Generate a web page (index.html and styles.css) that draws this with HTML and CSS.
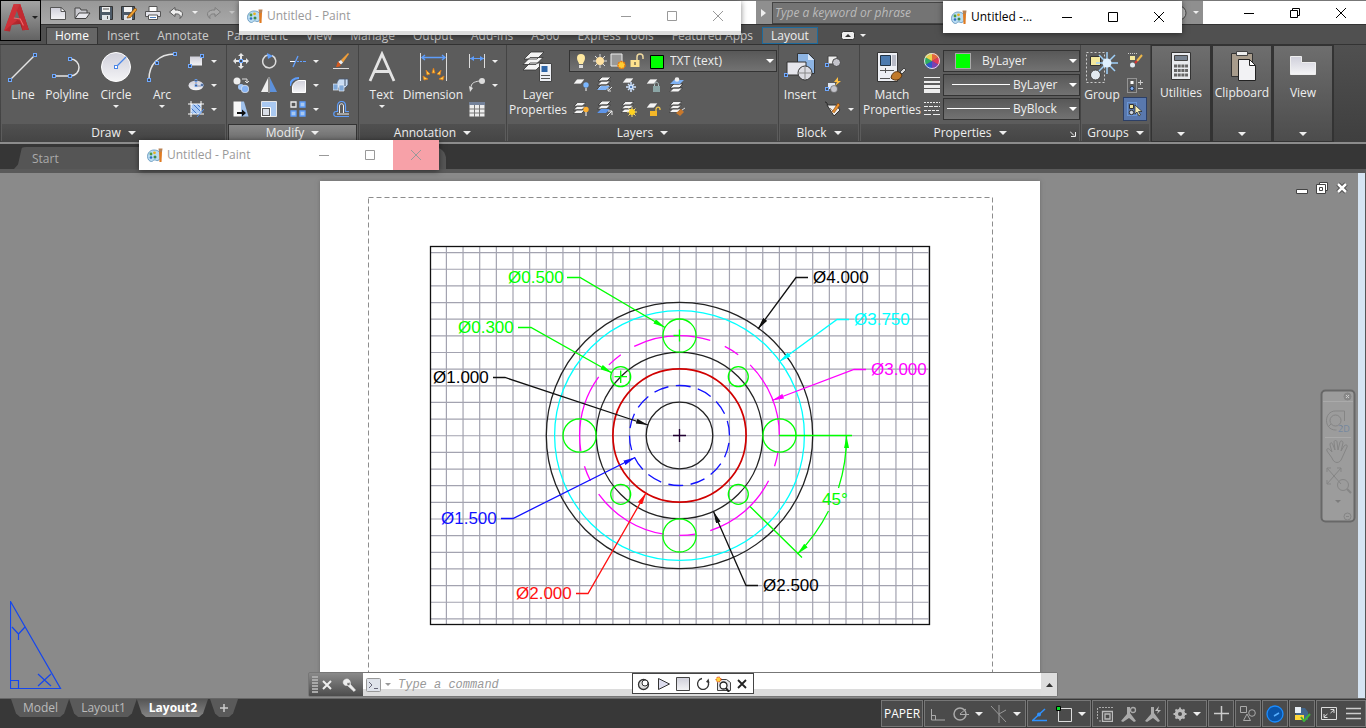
FILE: index.html
```html
<!DOCTYPE html>
<html lang="en">
<head>
  <meta charset="UTF-8">
  <meta name="viewport" content="width=device-width, initial-scale=1.0">
  <title>Layout2</title>
  <link rel="stylesheet" href="styles.css">
</head>
<body>

  <svg class="defs" width="0" height="0" aria-hidden="true">
    <defs>
      <linearGradient id="silver" x1="0" y1="0" x2="0" y2="1"><stop offset="0" stop-color="#cfcfda"/><stop offset="1" stop-color="#f4f4f6"/></linearGradient>
      <linearGradient id="red" x1="0" y1="0" x2="1" y2="1"><stop offset="0" stop-color="#e2464c"/><stop offset="1" stop-color="#8e1218"/></linearGradient>
      <symbol id="grip" viewBox="0 0 4 4"><rect x=".5" y=".5" width="3" height="3" fill="#3f4a5c" stroke="#6ea8ff"/></symbol>
      <symbol id="sheet" viewBox="0 0 12 5"><path d="M4 0h8L8 5H0z" fill="#f4f4f4" stroke="#3a3a3a" stroke-width=".6"/></symbol>
      <symbol id="stack" viewBox="0 0 14 12"><path d="M5 0h9l-4 4H1z M4.500 4h9l-4 4h-9z M4 8h9l-4 4H0z" fill="#f4f4f4" stroke="#333" stroke-width=".8"/></symbol>
      <symbol id="palette" viewBox="0 0 16 16">
        <path d="M7 3C3 3 0.500 6 .5 9.500c0 3 2 5 4 5 1.500 0 1.500-1.500 3-1.500s2 1 3.500.5c2-.8 2.500-3 2.500-5C13.500 5 11 3 7 3z" fill="#b9dcf2" stroke="#5b8fb8" stroke-width=".8"/>
        <circle cx="4" cy="7" r="1.400" fill="#4a9a3a"/><circle cx="7.500" cy="5.800" r="1.400" fill="#e9b020"/><circle cx="4" cy="10.500" r="1.300" fill="#2d6fc2"/><circle cx="8" cy="10" r="1.500" fill="#3d8a4a"/>
        <path d="M12 5h3l-.5 10h-2z" fill="#e07b22"/><path d="M11.500 1.500h4L15 5h-3z" fill="#b98252"/>
      </symbol>
      <marker id="arrow" viewBox="0 0 12 5" refX="12" refY="2.500" markerWidth="12" markerHeight="5" markerUnits="userSpaceOnUse" orient="auto-start-reverse"><path d="M0 0L12 2.500L0 5z" fill="context-stroke"/></marker>
    </defs>
  </svg>

  <header class="titlebar">
    <button class="app-button" aria-label="Application menu">
      <svg width="26" height="30" viewBox="0 0 24 28"><path d="M0 26L9 1h6l8 24-6 .5-2-6-8 1-1.500 6z" fill="url(#red)"/><path d="M0 26l11-9 3-3-4-11-1-2z" fill="#cf3138"/><path d="M9 15l3-8 3 9z" fill="#6b6b6b"/><path d="M9 15c4 0 8 3 8 10.500l6-.5L15 1l-3 6 2.500 7.500z" fill="#c22a31"/><path d="M9 14l6 1 3 6" stroke="#ee6a6d" fill="none"/></svg>
      <span class="caret dark"></span>
    </button>
    <div class="quick">
      <button aria-label="New"><svg width="16" height="14" viewBox="0 0 16 14"><path d="M.5 1.500H11l4.500 4v8H.5z" fill="url(#silver)" stroke="#555"/><path d="M11 1.500v4h4.500z" fill="#fff" stroke="#555"/></svg></button>
      <button aria-label="Open"><svg width="17" height="14" viewBox="0 0 17 14"><path d="M1 12V2h5l1 2h6v3" fill="#c9c9cf" stroke="#444"/><path d="M1 12.500L5 7h11l-4 5.500z" fill="#e8e8ee" stroke="#444"/></svg></button>
      <button aria-label="Save"><svg width="14" height="14" viewBox="0 0 14 14"><path d="M.5.5h13v13H.5z" fill="#4d5a68" stroke="#333"/><path d="M3 1h8v5H3z" fill="#f2f2f2"/><path d="M3 9h8v5H3z" fill="#dfe3e8"/><path d="M4 3h6M8.500 10v3" stroke="#555"/></svg></button>
      <button aria-label="Save as"><svg width="16" height="14" viewBox="0 0 16 14"><path d="M.5.5h13v13H.5z" fill="#4d5a68" stroke="#333"/><path d="M3 1h8v5H3z" fill="#f2f2f2"/><path d="M3 9h8v5H3z" fill="#dfe3e8"/><path d="M7 10l7-8 2 1.500-6.500 8L6 12z" fill="#f0a030" stroke="#6b3d10" stroke-width=".7"/></svg></button>
      <button aria-label="Plot"><svg width="16" height="14" viewBox="0 0 16 14"><path d="M4 .5h8V6H4z" fill="#fff" stroke="#555"/><path d="M.5 5.500h15v5H.5z" fill="#e4e4ea" stroke="#555"/><path d="M3.500 9h9v4.500h-9z" fill="#fff" stroke="#555"/><path d="M5 11.500h6" stroke="#4d80c0"/></svg></button>
      <button aria-label="Undo"><svg width="15" height="12" viewBox="0 0 15 12"><path d="M6 .5L.5 5 6 9.500V7c4-.5 6 1 5 4.500C16 7 13 2.500 6 3z" fill="#eee" stroke="#555"/></svg></button>
      <span class="caret"></span>
      <button aria-label="Redo"><svg width="15" height="12" viewBox="0 0 15 12"><path d="M9 .5L14.500 5 9 9.500V7c-4-.5-6 1-5 4.500C-1 7 2 2.500 9 3z" fill="#aaa" stroke="#7d7d7d"/></svg></button>
      <span class="caret faint"></span>
    </div>
    <div class="spacer"></div>
    <form class="search">
      <span class="search-arrow"></span>
      <input type="text" placeholder="Type a keyword or phrase" aria-label="Search">
      <span class="help"><svg width="16" height="16" viewBox="0 0 16 16"><circle cx="8" cy="8" r="7" fill="#bbb" stroke="#444"/></svg></span>
      <span class="caret"></span>
    </form>
    <div class="controls">
      <button aria-label="Minimize"><svg width="12" height="12" viewBox="0 0 12 12"><path d="M1 6.500h10"/></svg></button>
      <button aria-label="Restore"><svg width="12" height="12" viewBox="0 0 12 12"><path d="M1.500 3.500h7v7h-7zM3.500 3.500v-2h7v7h-2"/></svg></button>
      <button aria-label="Close"><svg width="12" height="12" viewBox="0 0 12 12"><path d="M1 1l10 10M11 1L1 11"/></svg></button>
    </div>
  </header>

  <nav class="tabs">
    <a href="#" class="active">Home</a>
    <a href="#">Insert</a>
    <a href="#">Annotate</a>
    <a href="#">Parametric</a>
    <a href="#">View</a>
    <a href="#">Manage</a>
    <a href="#">Output</a>
    <a href="#">Add-ins</a>
    <a href="#">A360</a>
    <a href="#">Express Tools</a>
    <a href="#">Featured Apps</a>
    <a href="#" class="context">Layout</a>
    <button class="collapse" aria-label="Minimize ribbon"><svg width="14" height="9" viewBox="0 0 14 9"><rect x=".5" y=".5" width="13" height="8" rx="2" fill="#eee" stroke="#333"/><path d="M4 6l3-3 3 3z" fill="#333"/></svg><span class="caret"></span></button>
  </nav>

  <main class="ribbon">
    <section class="panel draw">
      <div class="tools">
        <button class="big line"><svg width="32" height="32" viewBox="0 0 32 32"><path d="M4 28L28 4" stroke="#e4e4e4" stroke-width="1.500"/><use href="#grip" x="1" y="27" width="4" height="4"/><use href="#grip" x="26" y="2" width="4" height="4"/></svg>Line</button>
        <button class="big poly"><svg width="32" height="32" viewBox="0 0 32 32"><path d="M3 25h16c12 0 12-17 0-17" fill="none" stroke="#e4e4e4" stroke-width="1.500"/><use href="#grip" x="1" y="23" width="4" height="4"/><use href="#grip" x="17" y="23" width="4" height="4"/><use href="#grip" x="17" y="6" width="4" height="4"/></svg>Polyline</button>
        <button class="big circle"><svg width="32" height="32" viewBox="0 0 32 32"><circle cx="16" cy="16" r="14.500" fill="url(#silver)" stroke="#fff"/><path d="M16 16L26 6" stroke="#4a86e8" stroke-width="1.200"/><rect x="14.500" y="14.500" width="3" height="3" fill="#fff" stroke="#4a86e8"/></svg>Circle<span class="caret"></span></button>
        <button class="big arc"><svg width="32" height="32" viewBox="0 0 32 32"><path d="M3 28C3 14 12 3 29 3" fill="none" stroke="#e4e4e4" stroke-width="1.500"/><use href="#grip" x="1" y="27" width="4" height="4"/><use href="#grip" x="9" y="10" width="4" height="4"/><use href="#grip" x="27" y="1" width="4" height="4"/></svg>Arc<span class="caret"></span></button>
        <div class="column">
          <button class="split" aria-label="Rectangle"><svg width="16" height="16" viewBox="0 0 16 16"><rect x="2" y="3.500" width="12" height="9" fill="url(#silver)"/><use href="#grip" x="0" y="11" width="4" height="4"/><use href="#grip" x="12" y="1" width="4" height="4"/></svg><span class="caret"></span></button>
          <button class="split" aria-label="Ellipse"><svg width="16" height="16" viewBox="0 0 16 16"><ellipse cx="8" cy="8.500" rx="7.500" ry="4.800" fill="url(#silver)"/><path d="M8 4v5h5" fill="none" stroke="#557" stroke-width=".6"/><use href="#grip" x="6.500" y="2" width="3" height="3"/><use href="#grip" x="6.500" y="7" width="3" height="3"/><use href="#grip" x="12.500" y="6.500" width="3" height="3"/></svg><span class="caret"></span></button>
          <button class="split" aria-label="Hatch"><svg width="16" height="16" viewBox="0 0 16 16"><rect x="3" y="3" width="10" height="10" fill="#a9c9f4"/><path d="M3 7l6 6M3 11l2 2M5 3l8 8M9 3l4 4" stroke="#4174c4"/><path d="M3 0v16M13 0v12M0 3h16M0 13h16" stroke="#fff"/><path d="M9 16l7-8" stroke="#4a8cf0"/></svg><span class="caret"></span></button>
        </div>
      </div>
      <h2>Draw<span class="caret wide"></span></h2>
    </section>

    <section class="panel modify">
      <div class="tools grid">
        <button aria-label="Move"><svg width="16" height="16" viewBox="0 0 16 16"><path d="M8 0l3 3H9v3H7V3H5zM8 16l-3-3h2v-3h2v3h2zM0 8l3-3v2h3v2H3v2zM16 8l-3 3V9h-3V7h3V5z" fill="#e6e6e6"/><use href="#grip" x="6" y="6" width="4" height="4"/></svg></button>
        <button aria-label="Rotate"><svg width="16" height="16" viewBox="0 0 16 16"><path d="M11 2.500A6.500 6.500 0 1 1 7 2" fill="none" stroke="#ddd" stroke-width="1.500"/><path d="M6 0l6 3-5 3z" fill="#5e9dfa"/></svg></button>
        <button class="split" aria-label="Trim"><svg width="16" height="16" viewBox="0 0 16 16"><path d="M0 8.500h5" stroke="#fff"/><path d="M7 8.500h2m1 0h2m1 0h3" stroke="#62a0ff"/><path d="M3 14l5-11" stroke="#62a0ff" stroke-width="1.300"/></svg><span class="caret"></span></button>
        <button aria-label="Erase"><svg width="16" height="16" viewBox="0 0 16 16"><path d="M0 15.500h16" stroke="#ddd"/><path d="M15 0L8 7l2 2.500L16 1z" fill="#ee9d3a"/><path d="M8 7l2 2.500-2 2-3-2.500z" fill="#eee"/><path d="M5 8.500l3 3.500c-1 2-4 2-5 2 1-2 1-4 2-5.500z" fill="#d7591d"/></svg></button>
        <button aria-label="Copy"><svg width="16" height="16" viewBox="0 0 16 16"><circle cx="4" cy="4" r="3.500" fill="#eee"/><path d="M9 2h5v4m-2-2l2 2 2-2" fill="none" stroke="#ddd"/><circle cx="8" cy="10" r="3" fill="#9fc4f6"/><circle cx="12" cy="12" r="3.800" fill="#86b3f3" stroke="#eee" stroke-width=".7"/></svg></button>
        <button aria-label="Mirror"><svg width="16" height="16" viewBox="0 0 16 16"><path d="M7 1v14H0z" fill="#eee"/><path d="M9 1v14h7z" fill="#5d91db"/><path d="M8 0v16" stroke="#bbb"/></svg></button>
        <button class="split" aria-label="Fillet"><svg width="16" height="16" viewBox="0 0 16 16"><path d="M2.500 15.500V10C3 6 6 4 9 3.500h6.500v12z" fill="url(#silver)" stroke="#fff"/><path d="M0 9C0 4 4 1 9 1" fill="none" stroke="#5e9dfa" stroke-width="2"/></svg><span class="caret"></span></button>
        <button aria-label="Explode"><svg width="16" height="16" viewBox="0 0 16 16"><path d="M6 2h9v6l-3 3H4V5z" fill="#c9dcf3" stroke="#46566e" stroke-width=".8"/><path d="M0 7h5v6H0zM6 8h5v6H6z" fill="#7fa8d8" stroke="#e8eef6" stroke-width=".7"/><path d="M12 2v7" stroke="#46566e"/></svg></button>
        <button aria-label="Stretch"><svg width="16" height="16" viewBox="0 0 16 16"><path d="M.5.5H8v15H.5z" fill="#f7f7f7"/><path d="M8 .5h3L15.500 15.500H8z" fill="#9fc0ea"/><path d="M4 11h5V8.500l4 3.500-4 3.500V13H4z" fill="#111"/></svg></button>
        <button aria-label="Scale"><svg width="16" height="16" viewBox="0 0 16 16"><path d="M.5.5h15v15H.5z" fill="#a9c8f0" stroke="#e6e6e6"/><path d="M.5 6.500h9v9h-9z" fill="#555" stroke="#fff"/><path d="M2 8h6v6H2z" fill="#d8dde6"/></svg></button>
        <button class="split" aria-label="Array"><svg width="16" height="16" viewBox="0 0 16 16"><path d="M1 1h5v5H1z" fill="#555" stroke="#eee" stroke-width="1.300"/><path d="M10 1h5v5h-5zM1 10h5v5H1zM10 10h5v5h-5z" fill="#a9c8f0" stroke="#5e9dfa" stroke-width="1.300"/></svg><span class="caret"></span></button>
        <button aria-label="Offset"><svg width="16" height="16" viewBox="0 0 16 16"><path d="M16 15.500H3c-3 0-3-5 0-5h1.500V5c0-6 8-6 8 0v5.500H16" fill="none" stroke="#5e9dfa" stroke-width="1.200"/><path d="M16 13H4M6.500 12V5c0-3 4-3 4 0v7" fill="none" stroke="#eee"/></svg></button>
      </div>
      <h2 class="hover">Modify<span class="caret wide"></span></h2>
    </section>

    <section class="panel annotation">
      <div class="tools">
        <button class="big text"><svg width="32" height="32" viewBox="0 0 32 32"><path d="M4 30L16 3l12 27M8.500 20.500h15" fill="none" stroke="#e4e4e4" stroke-width="2.800"/></svg>Text<span class="caret"></span></button>
        <button class="big dim"><svg width="32" height="32" viewBox="0 0 32 32"><path d="M3.500 2v28M29.500 2v28" stroke="#ddd"/><path d="M5 6.500h23M8 4L5 6.500 8 9M25 4l3 2.500L25 9" stroke="#5e9dfa" fill="none" stroke-width="1.500"/><path d="M15 22l1.500-5 1.500 5zM10 24l-1-5 4 4zM23 24l1-5-4 4zM7 29l-1-4 5 3zM26 29l1-4-5 3z" fill="#ffd04a" stroke="#e07a18" stroke-width=".8"/></svg>Dimension</button>
        <div class="column">
          <button class="split" aria-label="Linear"><svg width="16" height="16" viewBox="0 0 16 16"><path d="M.5 1v14M15.500 1v14" stroke="#ddd"/><path d="M1 5.500h14" stroke="#5e9dfa"/><path d="M1 5.500L5 3v5zM15 5.500L11 3v5z" fill="#5e9dfa"/></svg><span class="caret"></span></button>
          <button class="split" aria-label="Leader"><svg width="16" height="16" viewBox="0 0 16 16"><path d="M2 11c0-5 3-6 8-7" fill="none" stroke="#ddd"/><path d="M1 15l-1-6 4 2z" fill="#ddd"/><circle cx="13" cy="4" r="3" fill="#ddd"/></svg><span class="caret"></span></button>
          <button class="split" aria-label="Table"><svg width="16" height="16" viewBox="0 0 16 16"><path d="M.5 1h15v14.500H.5z" fill="#eee"/><path d="M0 1h16v3H0z" fill="#74829a"/><path d="M5.500 4v12M10.500 4v12M0 8h16M0 12h16" stroke="#777"/></svg></button>
        </div>
      </div>
      <h2>Annotation<span class="caret wide"></span></h2>
    </section>

    <section class="panel layers">
      <div class="tools">
        <button class="big layerprop"><svg width="32" height="32" viewBox="0 0 32 32"><path d="M9 1h13l-7 7H2zM8 6.500h13l-7 7H1zM8 12h13l-7 7H1z" fill="#f4f4f4" stroke="#333" stroke-width=".8"/><path d="M17.500 12.500h12v18h-12z" fill="#eef1f6" stroke="#444"/><path d="M19.500 15h6v6h-6z" fill="#2d65a8"/><path d="M19 24.500h9M19 27.500h9" stroke="#555"/></svg>Layer<br>Properties</button>
        <div class="layer-tools">
          <label class="pick layer-pick">
            <select aria-label="Current layer"><option>TXT (text)</option></select>
            <svg width="96" height="20" viewBox="0 0 96 20">
              <path d="M9 3a4 4 0 0 1 4 4c0 3-2 4-2 6H7c0-2-2-3-2-6a4 4 0 0 1 4-4z" fill="#ffe9a0"/><path d="M7 14h4v3H7z" fill="#ddd"/>
              <path d="M28 3v14M21 10h14M23 5l10 10M33 5L23 15" stroke="#ddd"/><circle cx="28" cy="10" r="4" fill="#ffe2a2"/>
              <path d="M39 3h11v12H39z" fill="#999" stroke="#eee"/><circle cx="49.500" cy="14" r="3.500" fill="#ffcc33" stroke="#e8760c" stroke-width="1.500" stroke-dasharray="2 1"/>
              <path d="M58.500 9h9v7h-9z" fill="#ffe28e"/><path d="M65 9V6c0-4 6-4 6 0v2" fill="none" stroke="#eed9a0" stroke-width="1.500"/><path d="M63 11v3" stroke="#333"/>
              <path d="M78.500 4.500h13v13h-13z" fill="#0f0" stroke="#000"/>
            </svg>
          </label>
          <div class="layer-grid">
            <button aria-label="Layer off"><svg width="16" height="16" viewBox="0 0 16 16"><use href="#sheet" x="0" y="2" width="12" height="5"/><circle cx="13" cy="8" r="2.700" fill="#7bb7ff"/><path d="M13 11v3" stroke="#fff"/></svg></button>
            <button aria-label="Isolate"><svg width="16" height="16" viewBox="0 0 16 16"><use href="#stack" x="0" y="0" width="14" height="12"/><path d="M4 9h9l-4 4H0z" fill="#7fb2f4"/><path d="M15 10l-4 4m0-3v3h3" stroke="#ddd" fill="none"/></svg></button>
            <button aria-label="Freeze"><svg width="16" height="16" viewBox="0 0 16 16"><use href="#sheet" x="1" y="1" width="12" height="5"/><path d="M10 5v10M5 10h10M7 7l6 6M13 7l-6 6" stroke="#cfe4ff" stroke-width="1.500"/><circle cx="10" cy="10" r="1" fill="#2e5fa3"/></svg></button>
            <button aria-label="Lock"><svg width="16" height="16" viewBox="0 0 16 16"><use href="#sheet" x="1" y="2" width="12" height="5"/><path d="M8 9h7v6H8z" fill="#8ba6a6"/><path d="M9.500 9c-.5-5 4.500-5 4 0" fill="none" stroke="#b7cccc"/></svg></button>
            <button aria-label="Make current"><svg width="16" height="16" viewBox="0 0 16 16"><use href="#stack" x="0" y="3" width="15" height="12"/><path d="M5 3h10l-4 4H1z" fill="#7fb2f4"/><circle cx="8" cy="2.500" r="2.300" fill="#eee"/></svg></button>
            <button aria-label="Turn all on"><svg width="16" height="16" viewBox="0 0 16 16"><use href="#stack" x="0" y="1" width="13" height="12"/><circle cx="13" cy="8.500" r="2.700" fill="#ffb02e"/><path d="M13 11v4" stroke="#fff"/></svg></button>
            <button aria-label="Unisolate"><svg width="16" height="16" viewBox="0 0 16 16"><use href="#stack" x="0" y="0" width="14" height="12"/><path d="M4 8h9l-4 4H0z" fill="#5f95e8"/><path d="M10 15l5-5m-4 0h4v4" stroke="#eee" fill="none"/></svg></button>
            <button aria-label="Thaw"><svg width="16" height="16" viewBox="0 0 16 16"><use href="#stack" x="0" y="0" width="13" height="12"/><path d="M11 6v10M6 11h10M7.500 7.500l7 7M14.500 7.500l-7 7" stroke="#ffe27a"/><circle cx="11" cy="11" r="3" fill="#ffd21f"/></svg></button>
            <button aria-label="Unlock"><svg width="16" height="16" viewBox="0 0 16 16"><use href="#sheet" x="1" y="2" width="12" height="5"/><path d="M5 10h7v5H5z" fill="#f4b728"/><path d="M11 10c-.5-5 4.500-5 4-1" fill="none" stroke="#f4c94a" stroke-width="1.300"/></svg></button>
            <button aria-label="Match layer"><svg width="16" height="16" viewBox="0 0 16 16"><use href="#stack" x="0" y="0" width="13" height="12"/><path d="M7 12l5-4 3 3-4 4z" fill="#c8782c"/><path d="M13 9l3-2" stroke="#ddd"/></svg></button>
          </div>
        </div>
      </div>
      <h2>Layers<span class="caret wide"></span></h2>
    </section>

    <section class="panel block">
      <div class="tools">
        <button class="big insert"><svg width="32" height="32" viewBox="0 0 32 32"><path d="M13.500 2.500h11l6 6v14h-17z" fill="#8db4e3" stroke="#333"/><path d="M24 3v6h6z" fill="#dbe8f8"/><path d="M3 11h19v13H3z" fill="#e6e6ec" stroke="#333"/><circle cx="21" cy="22" r="7" fill="#dcdce2" stroke="#333"/><path d="M21 15v14M14 22h14" stroke="#888"/><use href="#grip" x="0" y="22" width="4" height="4"/></svg>Insert</button>
        <div class="column">
          <button class="split" aria-label="Create block"><svg width="16" height="16" viewBox="0 0 16 16"><path d="M3 3h9v8H3z" fill="#eee" stroke="#444"/><circle cx="11.500" cy="9.500" r="4" fill="#c3c3ca" stroke="#444"/><use href="#grip" x="0" y="10" width="4" height="4"/></svg></button>
          <button class="split" aria-label="Block editor"><svg width="16" height="16" viewBox="0 0 16 16"><path d="M3 6h7v6H3z" fill="#dfe6f2"/><circle cx="9" cy="12" r="3.500" fill="#c3c3ca" stroke="#555" stroke-width=".6"/><path d="M13 0l-4 5h3l-2 4 6-5h-3z" fill="#ffc042"/><use href="#grip" x="0" y="10" width="4" height="4"/></svg></button>
          <button class="split" aria-label="Edit attributes"><svg width="16" height="16" viewBox="0 0 16 16"><path d="M0 1c3 0 2 4 3 5" stroke="#222" fill="none"/><path d="M2 4h9l4 5-6 6z" fill="#eee" stroke="#333"/><path d="M5 7l3 3M7 11l6-9 2 2-6 8" fill="#e8902c" stroke="#7b3b0c" stroke-width=".6"/></svg><span class="caret"></span></button>
        </div>
      </div>
      <h2>Block<span class="caret wide"></span></h2>
    </section>

    <section class="panel properties">
      <div class="tools">
        <button class="big match"><svg width="32" height="32" viewBox="0 0 32 32"><path d="M1.500 1.500h20v29h-20z" fill="#eef0f5" stroke="#333"/><path d="M4.500 4.500h10v10h-10z" fill="#4c7bb0" stroke="#234"/><path d="M16 4h4v11h-4z" fill="#b9bcc8"/><path d="M4 19.500h14M9.500 17v5M4 27.500h10" stroke="#555"/><path d="M15 27c1-6 5-7 8-6l3 3c-1 5-7 7-11 3z" fill="#c27a2a" stroke="#5a3510"/><path d="M24 21l4-4 2 2-4 4z" fill="#dcdcdc" stroke="#444"/></svg>Match<br>Properties</button>
        <div class="props">
          <svg width="16" height="16" viewBox="0 0 16 16"><path d="M8 8V0a8 8 0 0 1 7 4z" fill="#e66a3c"/><path d="M8 8l7-4a8 8 0 0 1 0 8z" fill="#e03a5c"/><path d="M8 8l7 4a8 8 0 0 1-7 4z" fill="#7c3fb2"/><path d="M8 8v8a8 8 0 0 1-7-4z" fill="#2e58c9"/><path d="M8 8l-7 4a8 8 0 0 1 0-8z" fill="#2fae63"/><path d="M8 8L1 4a8 8 0 0 1 7-4z" fill="#e8d44d"/><circle cx="8" cy="8" r="7.500" fill="none" stroke="#ddd"/></svg>
          <label class="pick color-pick"><select aria-label="Object color"><option>ByLayer</option></select><i class="swatch"></i></label>
          <svg width="16" height="16" viewBox="0 0 16 16"><path d="M0 .5h16" stroke="#eee"/><path d="M0 5h16" stroke="#eee" stroke-width="2"/><path d="M0 9.500h16" stroke="#eee" stroke-width="3"/><path d="M0 14h16" stroke="#eee" stroke-width="4"/></svg>
          <label class="pick weight-pick"><select aria-label="Lineweight"><option>ByLayer</option></select><i class="rule"></i></label>
          <svg width="16" height="16" viewBox="0 0 16 16"><path d="M0 1.500h16" stroke="#eee" stroke-dasharray="2 1"/><path d="M0 5.500h16" stroke="#eee" stroke-dasharray="4 1"/><path d="M0 9.500h16" stroke="#eee" stroke-dasharray="3 1"/><path d="M0 13.500h16" stroke="#eee" stroke-dasharray="7 2"/></svg>
          <label class="pick type-pick"><select aria-label="Linetype"><option>ByBlock</option></select><i class="rule"></i></label>
        </div>
      </div>
      <h2>Properties<span class="caret wide"></span><svg class="launcher" width="6" height="6" viewBox="0 0 6 6"><path d="M0 .5l4 4M5.500 1v4.500H1" fill="none" stroke="#eee"/></svg></h2>
    </section>

    <section class="panel groups">
      <div class="tools">
        <button class="big group"><svg width="32" height="32" viewBox="0 0 32 32"><path d="M.5 1.500h18v30H.5z" fill="none" stroke="#ccc" stroke-dasharray="2 2"/><path d="M4.500 5.500h10v9h-10z" fill="#f4e89c" stroke="#333"/><circle cx="9.500" cy="24" r="5" fill="#e2eaf0" stroke="#444"/><path d="M21 1v22M10 12h22M13 4l16 16M29 4L13 20" stroke="#9fd0fa" stroke-width="1.500"/><circle cx="21" cy="12" r="4.500" fill="#dff0ff"/></svg>Group</button>
        <div class="column">
          <button aria-label="Group edit"><svg width="16" height="16" viewBox="0 0 16 16"><path d="M1 .5h9" stroke="#ccc" stroke-dasharray="1 1"/><path d="M3 3h5v4H3z" fill="#f4e89c"/><circle cx="5.500" cy="12" r="2.500" fill="#e2eaf0"/><path d="M10 8l5-6" stroke="#eeb84a" stroke-width="2"/><path d="M8 10l2-2" stroke="#d33" stroke-width="2"/></svg></button>
          <button aria-label="Ungroup"><svg width="16" height="16" viewBox="0 0 16 16"><path d="M.5 1.500h9v14h-9z" fill="none" stroke="#ccc" stroke-dasharray="1 1"/><path d="M3.500 4h3v3h-3z" fill="#fff"/><circle cx="5" cy="11.500" r="2" fill="#86b3f3" stroke="#235"/><path d="M11 5.500h5M13.500 3v5M11 11.500h5" stroke="#ccc"/></svg></button>
          <button class="on" aria-label="Group selection on"><svg width="16" height="16" viewBox="0 0 16 16"><path d="M.5 1.500h9v13h-9z" fill="none" stroke="#7ab4ff" stroke-dasharray="1 1"/><path d="M2.500 3.500h4v4h-4z" fill="#f4e89c" stroke="#333"/><circle cx="4.500" cy="11.500" r="2.200" fill="#cfd8e2" stroke="#333"/><path d="M8 4v9l2-2 2 4 1.500-1-2-3.500H15z" fill="#f6eeb8" stroke="#222" stroke-width=".7"/></svg></button>
        </div>
      </div>
      <h2>Groups<span class="caret wide"></span></h2>
    </section>

    <button class="folded"><svg width="32" height="32" viewBox="0 0 32 32"><path d="M6.500 2.500h19v27h-19z" fill="#e8eaee" stroke="#333"/><path d="M9.500 5.500h13v5h-13z" fill="#778290" stroke="#444"/><path d="M9 16h14M9 20.500h14M9 25h14" stroke="#666" stroke-width="3" stroke-dasharray="3 .7"/></svg>Utilities<span class="caret wide"></span></button>
    <button class="folded"><svg width="32" height="32" viewBox="0 0 32 32"><path d="M5.500 3.500h21v23h-21z" fill="#a89c8c" stroke="#333"/><path d="M10.500 1.500h11v4h-11z" fill="#eee" stroke="#444"/><path d="M12.500 9.500h11l6 6v15h-17z" fill="#f2f2f4" stroke="#222"/><path d="M23.500 9.500v6h6z" fill="#fff" stroke="#222"/></svg>Clipboard<span class="caret wide"></span></button>
    <button class="folded"><svg width="32" height="32" viewBox="0 0 32 32"><path d="M3.500 6.500h11v6h14v12h-25z" fill="url(#silver)" stroke="#eee"/></svg>View<span class="caret wide"></span></button>
  </main>

  <nav class="files">
    <a href="#">Start</a>
  </nav>

  <section class="canvas">
    <svg class="paper" width="720" height="509" viewBox="320 181 720 509">
      <rect x="368.500" y="197.500" width="624" height="475" fill="none" stroke="#8d8d8d" stroke-dasharray="5 3"/>
      <!-- quarter inch grid -->
      <path d="M445.800 435.500H929" stroke="#a3a3b0" stroke-width="378" stroke-dasharray="1.200 15.450"/>
      <path d="M679.500 252V624" stroke="#a3a3b0" stroke-width="498" stroke-dasharray="1.200 15.450"/>
      <rect x="430.500" y="246.500" width="499" height="378" fill="none" stroke="#111" stroke-width="1.300"/>
      <g transform="translate(679.500 435.500)" fill="none" stroke-width="1.300">
        <circle r="133.200" stroke="#222"/>
        <circle r="124.900" stroke="#0ff"/>
        <circle r="99.900" stroke="#f0f" pathLength="40" stroke-dasharray="5 1 1 1" transform="scale(1 -1)"/>
        <circle r="83.200" stroke="#222"/>
        <circle r="66.600" stroke="#d00000" stroke-width="1.700"/>
        <circle r="50" stroke="#11f" pathLength="42" stroke-dasharray="2 1" transform="scale(1 -1)"/>
        <circle r="33.300" stroke="#222"/>
        <g stroke="#0f0">
          <circle cy="-99.900" r="16.600"/><circle cy="99.900" r="16.600"/><circle cx="-99.900" r="16.600"/><circle cx="99.900" r="16.600"/>
          <circle cx="-58.800" cy="-58.800" r="10"/><circle cx="58.800" cy="-58.800" r="10"/><circle cx="-58.800" cy="58.800" r="10"/><circle cx="58.800" cy="58.800" r="10"/>
          <path d="M0-106V-94M-6-100H0M-58.800-65v12.500M-65-58.800h12.500"/>
        </g>
        <path d="M-6.500 0h13M0-6.500v13" stroke="#203"/>
      </g>
      <g fill="none" stroke-width="1.300">
        <g stroke="#0f0">
          <path d="M567 277.500H580L665 327.500" marker-end="url(#arrow)"/>
          <path d="M518 327.500H531L612 373" marker-end="url(#arrow)"/>
          <path d="M779 435.500H852M750 506.500L802 557.500"/>
          <path d="M846.500 436A167 167 0 0 1 838.500 488" marker-start="url(#arrow)"/>
          <path d="M828.500 511A167 167 0 0 1 797.500 554" marker-end="url(#arrow)"/>
        </g>
        <path d="M493 377.500H505L648 425" stroke="#111" marker-end="url(#arrow)"/>
        <path d="M808 277.500H796L758 329" stroke="#111" marker-end="url(#arrow)"/>
        <path d="M758 585.500H746L713.500 511.500" stroke="#111" marker-end="url(#arrow)"/>
        <path d="M849 319.500H837L779.500 361.500" stroke="#0ff" marker-end="url(#arrow)"/>
        <path d="M866 369.500H854L772 400.500" stroke="#f0f" marker-end="url(#arrow)"/>
        <path d="M501 518.500H513L635 457.500" stroke="#11f" marker-end="url(#arrow)"/>
        <path d="M576 593.500H588L646 493" stroke="#f11" marker-end="url(#arrow)"/>
      </g>
      <g class="dims">
        <text x="508" y="283" fill="#0f0">Ø0.500</text>
        <text x="458" y="333" fill="#0f0">Ø0.300</text>
        <text x="433" y="383">Ø1.000</text>
        <text x="441" y="524" fill="#11f">Ø1.500</text>
        <text x="516" y="599" fill="#f11">Ø2.000</text>
        <text x="763" y="591">Ø2.500</text>
        <text x="813" y="283">Ø4.000</text>
        <text x="854" y="325" fill="#0ff">Ø3.750</text>
        <text x="871" y="375" fill="#f0f">Ø3.000</text>
        <text x="822" y="505" fill="#0f0">45°</text>
      </g>
    </svg>

    <svg class="ucs" width="52" height="89" viewBox="0 0 52 89"><path d="M.5.5V87.500H50.500zM.5 79.500h8v8M2 26l6.500 7L15 26M8.500 33v6M28 73l13 12M41 73L28 85" fill="none" stroke="#1546ee" stroke-width="1.200"/></svg>

    <div class="doc-controls">
      <button aria-label="Minimize drawing"><svg width="12" height="12" viewBox="0 0 12 12"><path d="M.5 7.500h11v4H.5z" fill="#fff" stroke="#444"/></svg></button>
      <button aria-label="Restore drawing"><svg width="12" height="12" viewBox="0 0 12 12"><path d="M3.500.5h8v8h-8z" fill="#fff" stroke="#444"/><path d="M.5 2.500h9v9h-9z" fill="#fff" stroke="#444"/><path d="M3.500 5.500h3v3h-3z" stroke="#444" fill="none"/></svg></button>
      <button aria-label="Close drawing"><svg width="12" height="12" viewBox="0 0 12 12"><path d="M2 2l8 8M10 2l-8 8" stroke="#444" stroke-width="4.500"/><path d="M2 2l8 8M10 2l-8 8" stroke="#fff" stroke-width="2.500"/></svg></button>
    </div>

    <svg class="navbar" width="36" height="134" viewBox="0 0 36 134">
      <rect x="1.500" y="1.500" width="33" height="131" rx="4" fill="#9c9c9c" stroke="#686868" stroke-width="2"/>
      <g fill="none" stroke="#858585"><circle cx="27.500" cy="7.500" r="3.500" fill="#8a8a8a"/><path d="M26 6l3 3M29 6l-3 3" stroke="#ccc"/><path d="M3 12.500h30M5 48.500h26" stroke="#aaa"/>
        <path d="M24.500 32V22h-9c-12 0-12 19 0 19h1"/><circle cx="15.500" cy="31.500" r="5.500"/><path d="M11 35l-3 3M20 36l3 2"/>
        <path d="M12 69l-5-7c-1-3 2-3 3-1l2 2-2-7c0-3 2-3 3 0l2 5-1-8c0-2 3-2 3 0l1 8 2-8c1-2 3-1 3 1l-2 8 3-5c2-2 4-1 3 1l-5 11c-2 6-8 6-10 0z"/>
        <path d="M7 79l14 16M21 79L7 95M7 83v-4h4M17 79h4v4M7 91v4h4"/><circle cx="23" cy="96" r="5.500"/><path d="M27 100l4 4" stroke-width="2"/><circle cx="27.500" cy="127.500" r="3.500"/><path d="M26 127.500h3"/></g>
      <path d="M15 111h6l-3 3z" fill="#7c7c7c"/><text x="18" y="43" font-size="9" fill="#7488a0">2D</text>
    </svg>

    <form class="command">
      <span class="command-grip"></span>
      <button type="button" aria-label="Close command line"><svg width="10" height="10" viewBox="0 0 10 10"><path d="M1 1l8 8M9 1L1 9" stroke="#eee" stroke-width="2"/></svg></button>
      <button type="button" aria-label="Customize"><svg width="14" height="14" viewBox="0 0 14 14"><path d="M5 1L4 3l2 2 2-1c1 3-1 4-2.500 3.500L12 13.500l1.500-1.500L8 6c1-2-.5-5-3-5zM5 1C2 1 0 4 2 6.500c1 1 2 1 3.500 1" fill="#eee" stroke="#eee" stroke-width=".6"/></svg></button>
      <label>
        <svg width="16" height="14" viewBox="0 0 16 14"><rect x=".5" y=".5" width="14" height="13" rx="1" fill="#dfe3ea" stroke="#999"/><path d="M3 4l3 3-3 3M8 10.500h4" fill="none" stroke="#667"/></svg>
        <span class="caret grey"></span>
        <input type="text" placeholder="Type a command">
      </label>
      <button type="button" class="history" aria-label="Command history"><svg width="7" height="4" viewBox="0 0 7 4"><path d="M0 4l3.500-4L7 4z" fill="#333"/></svg></button>
    </form>

    <div class="preview">
      <button aria-label="Record"><svg width="14" height="14" viewBox="0 0 14 14"><circle cx="6.500" cy="7.500" r="5" fill="#ddd" stroke="#333" stroke-width="1.300"/><circle cx="8" cy="6" r="3" fill="#fff" stroke="#333"/></svg></button>
      <button aria-label="Play"><svg width="14" height="14" viewBox="0 0 14 14"><path d="M1.500 1.500L12.500 7l-11 5.500z" fill="#dde" stroke="#333"/></svg></button>
      <button aria-label="Stop"><svg width="14" height="14" viewBox="0 0 14 14"><path d="M.5.500h13v13H.500z" fill="url(#silver)" stroke="#444"/></svg></button>
      <button aria-label="Repeat"><svg width="14" height="14" viewBox="0 0 14 14"><path d="M6 1.500a5.500 5.500 0 1 0 6 3" fill="none" stroke="#333" stroke-width="1.300"/><path d="M10 5l2.500-3.500L13.500 6z" fill="#333"/></svg></button>
      <button aria-label="Show preview"><svg width="16" height="16" viewBox="0 0 16 16"><path d="M5.500 3.500h6l4 3v8h-13v-8z" fill="#e6e6ea" stroke="#444"/><circle cx="8.500" cy="9.500" r="3.500" fill="#fff" stroke="#222" stroke-width="1.300"/><path d="M11 12l3 4" stroke="#222" stroke-width="2"/><circle cx="3.500" cy="3.500" r="2.500" fill="#ffd23c" stroke="#e02a10" stroke-dasharray="1.300 1"/></svg></button>
      <button aria-label="Close"><svg width="14" height="14" viewBox="0 0 14 14"><path d="M3 3l8 8M11 3l-8 8" stroke="#222" stroke-width="1.800"/></svg></button>
    </div>
  </section>

  <footer class="status">
    <nav class="layouts">
      <a href="#">Model</a>
      <a href="#">Layout1</a>
      <a href="#" class="active">Layout2</a>
      <button aria-label="New layout"><svg width="8" height="8" viewBox="0 0 8 8"><path d="M4 0v8M0 4h8" stroke="#ccc" stroke-width="1.500"/></svg></button>
    </nav>
    <div class="status-tools">
      <div><button class="space">PAPER</button></div>
      <div>
        <button aria-label="Ortho"><svg width="16" height="16" viewBox="0 0 16 16"><path d="M2.500 3v11H16M2.500 9.500h4V14" fill="none" stroke="#aaa"/></svg></button>
        <button class="drop" aria-label="Polar tracking"><svg width="16" height="16" viewBox="0 0 16 16"><circle cx="7" cy="8" r="6" fill="none" stroke="#aaa" stroke-width="1.500"/><path d="M7 8.500h9M7 8l6-5" stroke="#aaa"/></svg><span class="caret wide"></span></button>
        <button class="drop" aria-label="Isometric drafting"><svg width="16" height="18" viewBox="0 0 16 18"><path d="M0 1l15 16M8 0v18M8 9l7-4" stroke="#999" fill="none"/></svg><span class="caret wide"></span></button>
      </div>
      <div>
        <button aria-label="Object snap tracking"><svg width="18" height="16" viewBox="0 0 18 16"><path d="M1 14.500h15M2 14L14 3" stroke="#2f92ff" stroke-width="1.500"/><circle cx="8" cy="8.500" r="2" fill="#2f92ff"/></svg></button>
        <button class="drop" aria-label="Object snap"><svg width="16" height="16" viewBox="0 0 16 16"><path d="M2.500 2.500h13v13h-13z" fill="none" stroke="#ddd"/><path d="M.5.500h4v4h-4z" fill="#0d2" stroke="#000"/></svg><span class="caret wide"></span></button>
      </div>
      <div>
        <button aria-label="Selection cycling"><svg width="16" height="16" viewBox="0 0 16 16"><path d="M.5 2v12M2 1.500h14M2 15h2" stroke="#aaa" stroke-dasharray="2 1"/><path d="M5.500 5.500h10v10h-10zM8 8h5v5H8z" fill="none" stroke="#bbb" stroke-width="1.300"/></svg></button>
        <button aria-label="Annotation visibility"><svg width="16" height="16" viewBox="0 0 16 16"><path d="M6 1h3v6l6 8-2 1-5-4-6 4-2-1 6-7z" fill="#aaa"/><circle cx="12" cy="4" r="2.500" fill="#4b4b4b" stroke="#aaa" stroke-width="1.300"/></svg></button>
        <button aria-label="Auto scale"><svg width="16" height="16" viewBox="0 0 16 16"><path d="M6 1h3v6l6 8-2 1-5-4-6 4-2-1 6-7z" fill="#aaa"/><path d="M14 0l-4 5h3l-1 3 4-4h-3z" fill="#bbb"/></svg></button>
      </div>
      <div>
        <button class="drop gear" aria-label="Workspace"><svg width="14" height="14" viewBox="0 0 14 14"><circle cx="7" cy="7" r="3.700" fill="none" stroke="#bbb" stroke-width="3"/><path d="M7 .5v13M.5 7h13M2.500 2.500l9 9M11.500 2.500l-9 9" stroke="#bbb" stroke-width="1.800"/><circle cx="7" cy="7" r="2" fill="#4b4b4b"/></svg><span class="caret wide"></span></button>
      </div>
      <div><button aria-label="Annotation monitor"><svg width="15" height="15" viewBox="0 0 15 15"><path d="M7.500 0v15M0 7.500h15" stroke="#ccc" stroke-width="1.500"/></svg></button></div>
      <div><button aria-label="Isolate objects"><svg width="16" height="16" viewBox="0 0 16 16"><path d="M.5.500h6v6h-6zM7 8l3.500 6.500h-7z" fill="none" stroke="#aaa"/><circle cx="12" cy="7" r="3.300" fill="none" stroke="#aaa"/></svg></button></div>
      <div><button aria-label="Hardware acceleration"><svg width="18" height="18" viewBox="0 0 18 18"><circle cx="9" cy="9" r="8" fill="#0a54a8" stroke="#1a8cff" stroke-width="1.300"/><path d="M8 11l5-3" stroke="#58b0ff" stroke-width="1.500"/></svg></button></div>
      <div><button aria-label="Updates"><svg width="17" height="16" viewBox="0 0 17 16"><path d="M2 2h9l3 4v8H2z" fill="#40658c"/><path d="M1 1h6v6H1z" fill="#e8eef4"/><path d="M1 9h9v5H1z" fill="#ffd73a"/><path d="M7 11l3 4 6-7" fill="none" stroke="#3cb23a" stroke-width="2"/></svg></button></div>
      <div>
        <button aria-label="Clean screen"><svg width="16" height="13" viewBox="0 0 16 13"><path d="M.5.500h15v12H.500z" fill="none" stroke="#ddd"/><path d="M3 10l3.500-3M3 7v3.500h3.500M13 3L9.500 6M9.500 2.500H13V6" fill="none" stroke="#ddd"/></svg></button>
        <button aria-label="Customization"><svg width="15" height="13" viewBox="0 0 15 13"><path d="M0 1.500h15M0 6.500h15M0 11.500h15" stroke="#ccc" stroke-width="1.500"/></svg></button>
      </div>
    </div>
  </footer>

  <!-- paint windows -->
  <section class="paint first">
    <svg width="16" height="16"><use href="#palette"/></svg>
    <h3>Untitled - Paint</h3>
    <div class="controls">
      <button aria-label="Minimize"><svg width="12" height="12" viewBox="0 0 12 12"><path d="M1 6.500h10"/></svg></button>
      <button aria-label="Maximize"><svg width="12" height="12" viewBox="0 0 12 12"><path d="M1.500 1.500h9v9h-9z"/></svg></button>
      <button aria-label="Close"><svg width="12" height="12" viewBox="0 0 12 12"><path d="M1 1l10 10M11 1L1 11"/></svg></button>
    </div>
  </section>
  <section class="paint second">
    <svg width="16" height="16"><use href="#palette"/></svg>
    <h3>Untitled -...</h3>
    <div class="controls">
      <button aria-label="Minimize"><svg width="12" height="12" viewBox="0 0 12 12"><path d="M1 6.500h10"/></svg></button>
      <button aria-label="Maximize"><svg width="12" height="12" viewBox="0 0 12 12"><path d="M1.500 1.500h9v9h-9z"/></svg></button>
      <button aria-label="Close"><svg width="12" height="12" viewBox="0 0 12 12"><path d="M1 1l10 10M11 1L1 11"/></svg></button>
    </div>
  </section>
  <section class="paint third">
    <svg width="16" height="16"><use href="#palette"/></svg>
    <h3>Untitled - Paint</h3>
    <div class="controls">
      <button aria-label="Minimize"><svg width="12" height="12" viewBox="0 0 12 12"><path d="M1 6.500h10"/></svg></button>
      <button aria-label="Maximize"><svg width="12" height="12" viewBox="0 0 12 12"><path d="M1.500 1.500h9v9h-9z"/></svg></button>
      <button class="close" aria-label="Close"><svg width="12" height="12" viewBox="0 0 12 12"><path d="M1 1l10 10M11 1L1 11"/></svg></button>
    </div>
  </section>

</body>
</html>
```
FILE: styles.css
```css
* {
  box-sizing: border-box;
}

body {
  margin: 0;
  height: 100vh;
  display: flex;
  flex-direction: column;
  position: relative;
  overflow: hidden;
  background: #383838;
  color: #eee;
  font-family: "Open Sans", "Noto Sans", sans-serif;
  font-size: 12px;
  line-height: 16px;
}

button {
  display: flex;
  align-items: center;
  justify-content: center;
  margin: 0;
  padding: 0;
  border: 0;
  background: none;
  color: inherit;
  font: inherit;
}

svg {
  display: block;
  flex: none;
}

a {
  color: inherit;
  text-decoration: none;
}

h2, h3 {
  margin: 0;
  font-size: 12px;
  font-weight: normal;
}

input, select {
  min-width: 0;
  border: 0;
  background: none;
  color: inherit;
  font: inherit;
}

.defs {
  position: absolute;
}

.caret {
  flex: none;
  border: 3px solid transparent;
  border-top-color: #eee;
  border-bottom: 0;
}

.caret.wide {
  border-width: 4px 4px 0;
}

.caret.dark { border-top-color: #222; }
.caret.faint { border-top-color: #c4c4c4; }
.caret.grey { border-top-color: #999; }

/* title bar */
.titlebar {
  display: flex;
  height: 24px;
  flex: none;
  background: #fff;
  border-top: 1px solid #777;
}

.app-button {
  position: absolute;
  top: 0;
  left: 0;
  z-index: 2;
  width: 41px;
  height: 41px;
  gap: 2px;
  padding-bottom: 6px;
  border: 1px solid #000;
  background: linear-gradient(#a3a3a3, #636363);
}

.quick {
  display: flex;
  align-items: center;
  gap: 8px;
  width: 254px;
  padding-left: 50px;
  background: linear-gradient(#989898, #a8a8a8);
}

.spacer {
  flex: 1;
}

.search {
  display: flex;
  align-items: center;
  width: 447px;
  padding-right: 4px;
  gap: 6px;
  background: #8f8f8f;
}

.search-arrow {
  margin-left: 5px;
  border: 4px solid transparent;
  border-left: 5px solid #eee;
  border-right: 0;
}

.search input {
  flex: 1;
  height: 22px;
  padding: 0 2px;
  border: 1px solid #444;
  background: #747474;
  font-style: italic;
}

.search input::placeholder {
  color: #bbb;
}

.controls {
  display: flex;
  margin-left: auto;
}

.controls button {
  width: 46px;
}

.controls svg {
  fill: none;
  stroke: currentColor;
}

.titlebar .controls {
  width: 163px;
  margin: 0;
  padding-left: 23px;
  color: #000;
}

/* ribbon tabs */
.tabs {
  display: flex;
  flex: none;
  height: 21px;
  padding: 2px 0 0 46px;
  background: #505050;
  border-top: 1px solid #333;
  border-bottom: 1px solid #333;
  color: #ccc;
}

.tabs a {
  padding: 0 8px;
  white-space: nowrap;
  border: 1px solid transparent;
  border-bottom: 0;
}

.tabs .active {
  border-color: #333;
  background: #666;
  color: #fff;
}

.tabs .context {
  border: 1px solid #1d6a9c;
  background: #6a6a6a;
  color: #eee;
}

.collapse {
  gap: 5px;
  margin-left: 23px;
}

/* ribbon panels */
.ribbon {
  display: flex;
  flex: none;
  height: 99px;
  padding-left: 1px;
  background: linear-gradient(#505050, #3f3f3f);
  border-bottom: 2px solid #8c8c8c;
}

.panel {
  display: flex;
  flex-direction: column;
  flex: none;
  border: 1px solid #444;
  border-width: 0 1px 1px 0;
  background: #5c5c5c;
}

.draw { width: 226px; }
.modify { width: 132px; }
.annotation { width: 148px; }
.layers { width: 272px; }
.block { width: 81px; }
.properties { width: 221px; }
.groups { width: 70px; }

.tools {
  display: flex;
  height: 79px;
  padding-top: 4px;
}

.panel h2 {
  position: relative;
  display: flex;
  align-items: center;
  justify-content: center;
  gap: 7px;
  margin: 0 1px;
  flex: 1;
  background: linear-gradient(#505050, #454545);
}

.panel .hover {
  background: linear-gradient(#888, #6e6e6e);
  border: 1px solid #333;
  border-bottom: 0;
}

.launcher {
  position: absolute;
  right: 3px;
  bottom: 4px;
}

.big {
  flex-direction: column;
  justify-content: flex-start;
  padding-top: 2px;
  line-height: 15px;
}

.big svg {
  margin-bottom: 4px;
}

.big .caret {
  margin-top: 3px;
}

.line, .poly { width: 44px; }
.circle { width: 54px; }
.arc { width: 38px; }
.text { width: 48px; }
.dim { width: 58px; }
.layerprop { width: 62px; }
.insert { width: 42px; }
.match { width: 64px; }
.group { width: 42px; }

.column button {
  height: 24px;
}

.split {
  width: 44px;
  padding-left: 7px;
  gap: 7px;
  justify-content: flex-start;
}

.block .split {
  width: 36px;
  padding-left: 4px;
}

.grid {
  display: grid;
  grid-template-columns: 28px 28px 44px 28px;
  grid-auto-rows: 24px;
}

.layer-tools {
  width: 208px;
  padding-top: 1px;
}

.pick {
  position: relative;
  display: block;
}

.pick::after {
  content: "";
  position: absolute;
  right: 3px;
  top: 9px;
  border: 4px solid transparent;
  border-top-color: #fff;
  border-bottom: 0;
}

.pick svg, .pick i {
  position: absolute;
}

.pick select {
  display: block;
  appearance: none;
  width: 100%;
  height: 22px;
  border: 1px solid #333;
  background: linear-gradient(#585858, #727272);
}

.layer-pick svg {
  left: 3px;
  top: 1px;
}

.layer-pick select {
  padding-left: 100px;
}

.layer-grid {
  display: grid;
  grid-template-columns: repeat(5, 24px);
  grid-auto-rows: 24px;
  padding-top: 1px;
}

.props {
  display: grid;
  grid-template-columns: 16px 1fr;
  grid-auto-rows: 22px;
  gap: 2px 3px;
  flex: 1;
  align-items: center;
  align-content: start;
  padding-top: 1px;
}

.color-pick select { padding-left: 38px; }
.weight-pick select, .type-pick select { padding-left: 69px; }

.swatch {
  left: 12px;
  top: 3px;
  width: 16px;
  height: 16px;
  background: #0f0;
  border: 1px solid #aaa;
}

.rule {
  left: 9px;
  top: 10px;
  width: 58px;
  height: 1px;
  background: #fff;
}

.type-pick .rule {
  left: 4px;
  width: 63px;
}

.groups .column button {
  width: 24px;
}

.groups .on {
  background: #5978ad;
  border: 1px solid #2c3f66;
}

.folded {
  flex: none;
  flex-direction: column;
  justify-content: flex-start;
  width: 61px;
  padding: 4px 0 5px;
  border: 1px solid #333;
  border-width: 1px 2px 1px 1px;
  background: linear-gradient(#6e6e6e, #4c4c4c);
}

.folded svg {
  margin-bottom: 3px;
}

.folded .caret {
  margin-top: auto;
}

/* drawing tabs */
.files {
  flex: none;
  height: 29px;
  padding: 3px 0 0 14px;
  background: #363636;
  border-bottom: 4px solid #5a5a5a;
  color: #aaa;
}

.files a {
  display: block;
  width: 432px;
  height: 22px;
  padding: 4px 0 0 18px;
  border-radius: 12px 12px 0 0;
  background: #555;
  clip-path: polygon(8px 0, 100% 0, 100% 100%, 0 100%, 4px 80%);
}

/* canvas */
.canvas {
  position: relative;
  flex: 1;
  padding: 8px 6px 0 0;
  background: #8a8a8a;
  border-right: 1px solid #555;
  overflow: hidden;
}

.canvas::after {
  content: "";
  position: absolute;
  top: 0;
  right: 0;
  bottom: 0;
  width: 7px;
  background: #d6e4f2;
}

.paper {
  margin: 0 auto;
  background: #fff;
  box-shadow: 0 0 4px #6c6c6c;
}

.dims {
  font-family: "Liberation Sans", Arial, sans-serif;
  font-size: 17px;
  fill: #000;
}

.ucs {
  position: absolute;
  left: 10px;
  bottom: 8px;
}

.doc-controls {
  position: absolute;
  top: 9px;
  right: 17px;
  display: flex;
  gap: 8px;
}

.navbar {
  position: absolute;
  top: 216px;
  right: 9px;
}

.command {
  position: absolute;
  left: 308px;
  right: 307px;
  bottom: 1px;
  display: flex;
  align-items: center;
  height: 25px;
  border: 1px solid #777;
  border-radius: 2px;
  background: linear-gradient(#8a8a8a, #4c4c4c);
}

.command-grip {
  width: 6px;
  height: 17px;
  margin: 0 1px 0 3px;
  background: repeating-linear-gradient(#aaa 0 2px, transparent 2px 3px);
}

.command button {
  width: 16px;
  margin-right: 6px;
}

.command label {
  display: flex;
  align-items: center;
  flex: 1;
  align-self: stretch;
  padding-left: 3px;
  gap: 3px;
  background: linear-gradient(#fff 0 16px, #dcdcdc 16px);
}

.command input {
  flex: 1;
  padding: 0 4px;
  font-family: "Liberation Mono", monospace;
  font-style: italic;
}

.command input::placeholder {
  color: #999;
}

.command .history {
  align-self: stretch;
  margin: 0;
  background: #ddd;
}

.preview {
  position: absolute;
  left: 632px;
  bottom: 4px;
  display: flex;
  align-items: center;
  width: 122px;
  height: 21px;
  padding: 0 1px;
  border: 1px solid #444;
  background: #fff;
}

.preview button {
  width: 20px;
}

/* status bar */
.status {
  display: flex;
  flex: none;
  justify-content: space-between;
  height: 30px;
  border-top: 1px solid #666;
  background: #383838;
}

.layouts {
  display: flex;
  padding-left: 11px;
  color: #bbb;
}

.layouts a, .layouts button {
  height: 18px;
  padding: 1px 11px 0 12px;
  background: #5a5a5a;
  clip-path: polygon(0 0, 100% 0, calc(100% - 5px) 80%, calc(100% - 9px) 100%, 9px 100%, 5px 80%);
}

.layouts .active {
  background: linear-gradient(#555, #858585);
  color: #fff;
  font-weight: bold;
}

.layouts button {
  width: 28px;
  padding: 0;
  margin-left: 2px;
}

.status-tools {
  display: flex;
  gap: 1px;
  padding: 1px 0;
}

.status-tools div {
  display: flex;
  align-items: center;
  border: 1px solid #777;
  background: #4b4b4b;
}

.status-tools button {
  width: 24px;
}

.status-tools .space {
  width: 40px;
  color: #fff;
}

.status-tools .drop {
  width: 38px;
  gap: 6px;
}

/* floating windows */
.paint {
  position: absolute;
  z-index: 3;
  display: flex;
  align-items: center;
  gap: 4px;
  padding-left: 8px;
  background: #fff;
  color: #999;
  box-shadow: 0 1px 6px rgba(0, 0, 0, 0.5);
}

.paint .controls {
  align-self: stretch;
}

.first {
  top: 1px;
  left: 239px;
  width: 502px;
  height: 34px;
  border-bottom: 4px solid #ddd;
}

.second {
  top: 1px;
  left: 943px;
  width: 239px;
  height: 32px;
  color: #000;
}

.third {
  top: 140px;
  left: 139px;
  width: 300px;
  height: 30px;
}

.third .close {
  background: #f7a1a8;
}
```
